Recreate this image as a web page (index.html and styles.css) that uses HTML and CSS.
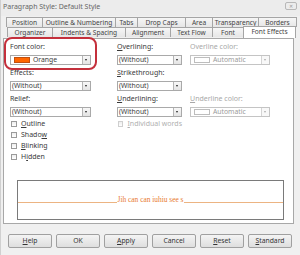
FILE: index.html
```html
<!DOCTYPE html>
<html>
<head>
<meta charset="utf-8">
<link rel="stylesheet" href="styles.css">
</head>
<body>
<div class="win">
  <div class="titlebar">
    <span class="title">Paragraph Style: Default Style</span>
    <span class="close">✕</span>
  </div>
  <div class="tabs">
    <div class="tabrow row1">
      <div class="tab w36">Position</div>
      <div class="tab w73">Outline &amp; Numbering</div>
      <div class="tab w22">Tabs</div>
      <div class="tab w48">Drop Caps</div>
      <div class="tab w27">Area</div>
      <div class="tab w46">Transparency</div>
      <div class="tab w37">Borders</div>
    </div>
    <div class="tabrow row2">
      <div class="tab w45">Organizer</div>
      <div class="tab w73">Indents &amp; Spacing</div>
      <div class="tab w45">Alignment</div>
      <div class="tab w42">Text Flow</div>
      <div class="tab w31">Font</div>
      <div class="tab sel">Font Effects</div>
    </div>
  </div>
  <div class="panel">
    <div class="grid">
      <div class="col c1">
        <div class="lbl">Font color:</div>
        <div class="dd"><span class="sw orange"></span><span class="val">Orange</span><span class="arr"></span></div>
        <div class="lbl">Effects:</div>
        <div class="dd"><span class="val">(Without)</span><span class="arr"></span></div>
        <div class="lbl">Relief:</div>
        <div class="dd"><span class="val">(Without)</span><span class="arr"></span></div>
        <div class="checks">
          <div class="chk"><span class="box"></span><span><u>O</u>utline</span></div>
          <div class="chk"><span class="box"></span><span>Shado<u>w</u></span></div>
          <div class="chk"><span class="box"></span><span><u>B</u>linking</span></div>
          <div class="chk"><span class="box"></span><span>H<u>i</u>dden</span></div>
        </div>
      </div>
      <div class="col c2">
        <div class="lbl"><u>O</u>verlining:</div>
        <div class="dd"><span class="val">(Without)</span><span class="arr"></span></div>
        <div class="lbl"><u>S</u>trikethrough:</div>
        <div class="dd"><span class="val">(Without)</span><span class="arr"></span></div>
        <div class="lbl"><u>U</u>nderlining:</div>
        <div class="dd"><span class="val">(Without)</span><span class="arr"></span></div>
        <div class="checks">
          <div class="chk dis"><span class="box"></span><span><u>I</u>ndividual words</span></div>
        </div>
      </div>
      <div class="col c3">
        <div class="lbl dis">Overline color:</div>
        <div class="dd dis"><span class="sw white"></span><span class="val">Automatic</span><span class="arr"></span></div>
        <div class="lbl empty"></div>
        <div class="dd empty"></div>
        <div class="lbl dis"><u>U</u>nderline color:</div>
        <div class="dd dis"><span class="sw white"></span><span class="val">Automatic</span><span class="arr"></span></div>
      </div>
    </div>
    <div class="preview">
      <div class="line"></div>
      <span class="ptext">Jih can can iuhiu see s</span>
      <div class="line"></div>
    </div>
  </div>
  <div class="buttons">
    <div class="btn"><u>H</u>elp</div>
    <div class="btn">OK</div>
    <div class="btn"><u>A</u>pply</div>
    <div class="btn">Cancel</div>
    <div class="btn"><u>R</u>eset</div>
    <div class="btn"><u>S</u>tandard</div>
  </div>
  <div class="highlight"></div>
</div>
</body>
</html>
```
FILE: styles.css
```css
* { box-sizing: border-box; }
html, body { margin: 0; padding: 0; }
body {
  width: 300px;
  height: 255px;
  overflow: hidden;
  background: #f0f0f0;
  font-family: "Noto Sans", "Open Sans", sans-serif;
  font-size: 7px;
  color: #3a3a3a;
}
.win {
  position: relative;
  width: 300px;
  height: 255px;
  background: #f0f0f0;
  border-left: 1px solid #d0d0d0;
}
.titlebar {
  height: 16px;
  display: flex;
  align-items: flex-start;
  justify-content: space-between;
  padding: 2px 3px 0 2px;
  background: #ececec;
}
.title { color: #666; font-size: 7px; line-height: 9px; }
.close {
  width: 12px; height: 8px;
  border: 1px solid #b8b8b8;
  border-radius: 2px;
  font-size: 5px; line-height: 6px;
  text-align: center; color: #999;
}
.tabs { height: 21px; position: relative; }
.tabrow { display: flex; height: 10px; }
.row1 { padding-left: 5px; margin-top: 1px; }
.row2 { padding-left: 6px; }
.tab {
  height: 10px;
  border: 1px solid #a5a5a5;
  border-bottom: none;
  margin-right: -1px;
  background: linear-gradient(#f6f6f6, #e6e6e6);
  font-size: 6.6px;
  line-height: 9px;
  text-align: center;
  white-space: nowrap;
  color: #444;
}
.w22 { width: 23px; } .w27 { width: 28px; } .w31 { width: 32px; }
.w36 { width: 37px; } .w37 { width: 39px; } .w42 { width: 43px; }
.w45 { width: 46px; } .w46 { width: 47px; } .w48 { width: 49px; }
.w73 { width: 74px; }
.tab.sel {
  width: 53px;
  height: 12px;
  margin-top: -1px;
  background: #fff;
  position: relative;
  z-index: 2;
  line-height: 10px;
}
.panel {
  margin-left: 2px;
  width: 291px;
  height: 186px;
  border: 1px solid #a8a8a8;
  background: #fff;
  position: relative;
  padding: 3px 0 0 6px;
  display: flex;
  flex-direction: column;
}
.grid { display: flex; height: 132px; }
.col { display: flex; flex-direction: column; }
.c1 { width: 81px; }
.c2 { width: 65px; margin-left: 26px; }
.c3 { width: 80px; margin-left: 8px; }
.lbl { height: 9px; line-height: 9px; margin-bottom: 4px; white-space: nowrap; }
.lbl.dis { color: #a8a8a8; }
.dd {
  height: 10px;
  border: 1px solid #a9a9a9;
  display: flex;
  align-items: center;
  padding-left: 1px;
  margin-bottom: 3px;
  background: #fff;
  position: relative;
}
.dd.empty { border: none; }
.dd.dis { color: #9a9a9a; border-color: #c4c4c4; }
.val { flex: 1; line-height: 8px; white-space: nowrap; font-size: 6.8px; }
.sw { width: 16px; height: 6px; margin: 0 3px 0 2px; border: 1px solid #888; }
.sw.orange { background: #ff6600; border-color: #c05010; }
.sw.white { background: #fff; border-color: #bdbdbd; }
.arr {
  width: 8px; height: 8px;
  border-left: 1px solid #b5b5b5;
  background: linear-gradient(#f8f8f8, #e4e4e4);
  position: relative;
}
.arr::after {
  content: "";
  position: absolute;
  left: 2px; top: 3px;
  border-left: 1.5px solid transparent;
  border-right: 1.5px solid transparent;
  border-top: 2px solid #222;
}
.dd.dis .arr::after { border-top-color: #aaa; }
.dd.dis .arr { background: #f8f8f8; border-left-color: #d4d4d4; }
.checks { display: flex; flex-direction: column; margin-top: -2px; }
.chk { height: 11px; display: flex; align-items: center; white-space: nowrap; }
.chk .box {
  width: 6px; height: 6px;
  border: 1px solid #9a9a9a;
  background: linear-gradient(#eee, #fff);
  margin: 0 4px 0 1px;
}
.chk.dis { color: #b0b0b0; }
.chk.dis .box { border-color: #cfcfcf; }
.preview {
  margin: 6px 0 0 7px;
  width: 267px;
  height: 40px;
  border: 1px solid #7a7a7a;
  display: flex;
  align-items: flex-end;
  padding-bottom: 15px;
}
.preview .line { flex: 1; height: 1px; background: #ecb482; margin-bottom: 1px; }
.ptext {
  font-family: "Liberation Serif", serif;
  font-size: 7.4px;
  color: #e87a30;
  line-height: 8px;
  padding: 0 1px;
}
.buttons {
  display: grid;
  grid-template-columns: repeat(6, 44px);
  column-gap: 4px;
  padding-left: 7px;
  margin-top: 10px;
}
.btn {
  height: 14px;
  border: 1px solid #a0a0a0;
  border-radius: 2px;
  background: linear-gradient(#f4f4f4, #dedede);
  text-align: center;
  line-height: 12px;
  font-size: 6.8px;
  color: #333;
}
.highlight {
  position: absolute;
  left: 3px; top: 37px;
  width: 93px; height: 33px;
  border: 2px solid #c4303c;
  border-radius: 8px;
  z-index: 5;
}
```
